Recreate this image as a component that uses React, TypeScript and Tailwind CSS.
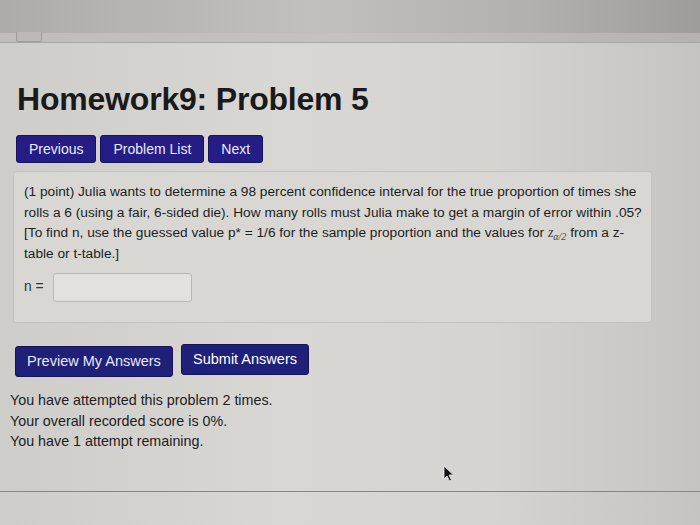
import React from "react";

const font = { fontFamily: '"Liberation Sans", Arial, Helvetica, sans-serif' };

function NavButton({ children }: { children: React.ReactNode }) {
  return (
    <button className="h-[28px] rounded-[3px] border border-[#16125e] bg-[#231d85] px-[12px] text-[14px] leading-none text-[#ecebf4]">
      {children}
    </button>
  );
}

export default function App() {
  return (
    <div
      className="relative flex h-[525px] w-[700px] flex-col overflow-hidden bg-[linear-gradient(90deg,#cfcdca_0%,#d9d7d4_40%,#d6d4d1_70%,#c6c4c1_100%)] text-[#1b1b1b]"
      style={font}
    >
      {/* top browser chrome */}
      <div className="h-[33px] bg-[linear-gradient(90deg,#aeaba9_0%,#c2bfbd_45%,#b3b0ae_75%,#9f9c9a_100%)]" />
      <div className="flex h-[10px] items-end border-b border-[#a9a6a4] bg-[linear-gradient(90deg,#c0bdbb_0%,#c4c1bf_50%,#b5b2b0_100%)] pl-[16px]">
        <div className="h-[10px] w-[26px] rounded-b-[2px] border border-t-0 border-[#9d9a98] bg-[#bcb9b7]" />
      </div>

      {/* heading */}
      <h1 className="ml-[17px] mt-[40px] text-[32px] font-bold leading-none tracking-[-0.2px] text-[#1a1a1a]">
        Homework9: Problem 5
      </h1>

      {/* nav buttons */}
      <div className="ml-[16px] mt-[20px] flex gap-[4px]">
        <NavButton>Previous</NavButton>
        <NavButton>Problem List</NavButton>
        <NavButton>Next</NavButton>
      </div>

      {/* problem panel */}
      <div className="ml-[13px] mt-[8px] h-[152px] w-[639px] rounded-[3px] border border-[#c3c2be] bg-[#d8d7d3] px-[10px] pt-[10px]">
        <p className="whitespace-nowrap text-[13.7px] leading-[20.5px] text-[#1e1e1e]">
          (1 point) Julia wants to determine a 98 percent confidence interval for the true proportion of times she
          <br />
          rolls a 6 (using a fair, 6-sided die). How many rolls must Julia make to get a margin of error within .05?
          <br />
          [To find n, use the guessed value p* = 1/6 for the sample proportion and the values for{" "}
          <span className="inline-block font-['Liberation_Serif'] text-[14px] italic leading-none text-[#444]">
            z<span className="relative top-[3px] text-[10px]">α/2</span>
          </span>{" "}
          from a z-
          <br />
          table or t-table.]
        </p>
        <div className="mt-[9px] flex items-center gap-[9px]">
          <span className="text-[13.8px] text-[#333]">n =</span>
          <div className="h-[29px] w-[139px] rounded-[3px] border border-[#b9b8b4] bg-[#e2e1de]" />
        </div>
      </div>

      {/* submit buttons */}
      <div className="ml-[15px] mt-[21px] flex items-start gap-[8px]">
        <button className="mt-[2px] h-[31px] w-[158px] rounded-[3px] border border-[#15125a] bg-[#1f2078] text-[14.5px] leading-none text-[#e9e9f1]">
          Preview My Answers
        </button>
        <button className="h-[31px] w-[128px] rounded-[3px] border border-[#15125a] bg-[#1f2078] text-[14.5px] leading-none text-[#ffffff]">
          Submit Answers
        </button>
      </div>

      {/* attempt info */}
      <div className="ml-[10px] mt-[13px] text-[14.3px] leading-[20.5px] text-[#1c1c1c]">
        <div>You have attempted this problem 2 times.</div>
        <div>Your overall recorded score is 0%.</div>
        <div>You have 1 attempt remaining.</div>
      </div>

      {/* cursor */}
      <svg className="absolute left-[443px] top-[465px]" width="12" height="17" viewBox="0 0 12 17">
        <path d="M1 1 L1 14 L4 11 L6.5 16 L8.5 15 L6 10 L10.5 10 Z" fill="#111" stroke="#eee" strokeWidth="0.8" />
      </svg>

      {/* bottom line */}
      <div className="mt-auto mb-[33px] h-[1px] bg-[#888684]" />
    </div>
  );
}
